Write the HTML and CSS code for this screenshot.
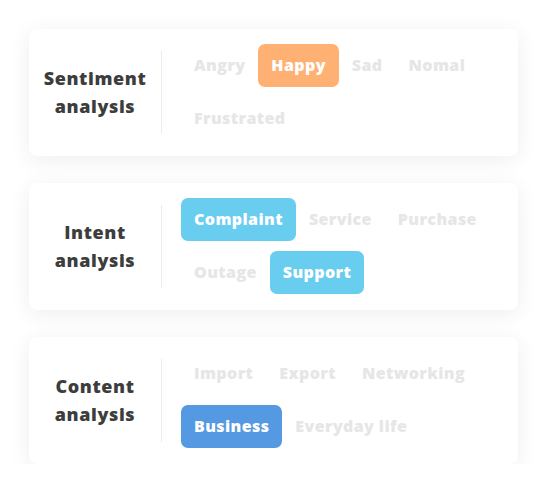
FILE: index.html
```html
<!DOCTYPE html>
<html lang="en">
<head>
  <meta charset="UTF-8" />
  <meta name="viewport" content="width=device-width, initial-scale=1.0"/>
  <title>Text analysis</title>
  <link rel="stylesheet" href="styles.css">
</head>
<body>
  <div class="panel">
    <div class="card">
      <div class="card-label">Sentiment<br>analysis</div>
      <div class="divider"></div>
      <div class="tags">
        <span class="tag">Angry</span>
        <span class="tag on orange">Happy</span>
        <span class="tag">Sad</span>
        <span class="tag">Nomal</span>
        <span class="tag">Frustrated</span>
      </div>
    </div>

    <div class="card">
      <div class="card-label">Intent<br>analysis</div>
      <div class="divider"></div>
      <div class="tags">
        <span class="tag on sky">Complaint</span>
        <span class="tag">Service</span>
        <span class="tag">Purchase</span>
        <span class="tag">Outage</span>
        <span class="tag on sky">Support</span>
      </div>
    </div>

    <div class="card">
      <div class="card-label">Content<br>analysis</div>
      <div class="divider"></div>
      <div class="tags">
        <span class="tag">Import</span>
        <span class="tag">Export</span>
        <span class="tag">Networking</span>
        <span class="tag on blue">Business</span>
        <span class="tag">Everyday life</span>
      </div>
    </div>
  </div>
</body>
</html>
```

FILE: styles.css
```css
:root {
  --label-color: #3d3d3d;
  --muted-color: #e6e6e6;
  --orange: #ffb173;
  --sky: #69cdf0;
  --blue: #5599e2;
}

body {
  background-color: #ffffff;
  font-family: "Open Sans", "Noto Sans", sans-serif;
  margin: 0;
}

.panel {
  display: flex;
  flex-direction: column;
  gap: 27px;
  width: 489px;
  padding: 29px 0 0 29px;
}

.card {
  display: flex;
  align-items: center;
  background-color: #ffffff;
  border-radius: 8px;
  box-shadow: 0 4px 22px rgba(0, 0, 0, 0.07);
  padding: 15px 20px 16px 0;
}

.card-label {
  width: 132px;
  flex-shrink: 0;
  text-align: center;
  font-size: 18px;
  font-weight: 800;
  letter-spacing: 0.6px;
  line-height: 28px;
  color: var(--label-color);
}

.divider {
  width: 1px;
  height: 83px;
  flex-shrink: 0;
  background-color: #ececec;
}

.tags {
  display: flex;
  flex-wrap: wrap;
  row-gap: 10px;
  margin-left: 19px;
}

.tag {
  padding: 10px 13px;
  border-radius: 7px;
  font-size: 16px;
  font-weight: 800;
  letter-spacing: 0.4px;
  line-height: 23px;
  color: var(--muted-color);
}

.tag.on {
  color: #ffffff;
}

.orange {
  background-color: var(--orange);
}

.sky {
  background-color: var(--sky);
}

.blue {
  background-color: var(--blue);
}
```
